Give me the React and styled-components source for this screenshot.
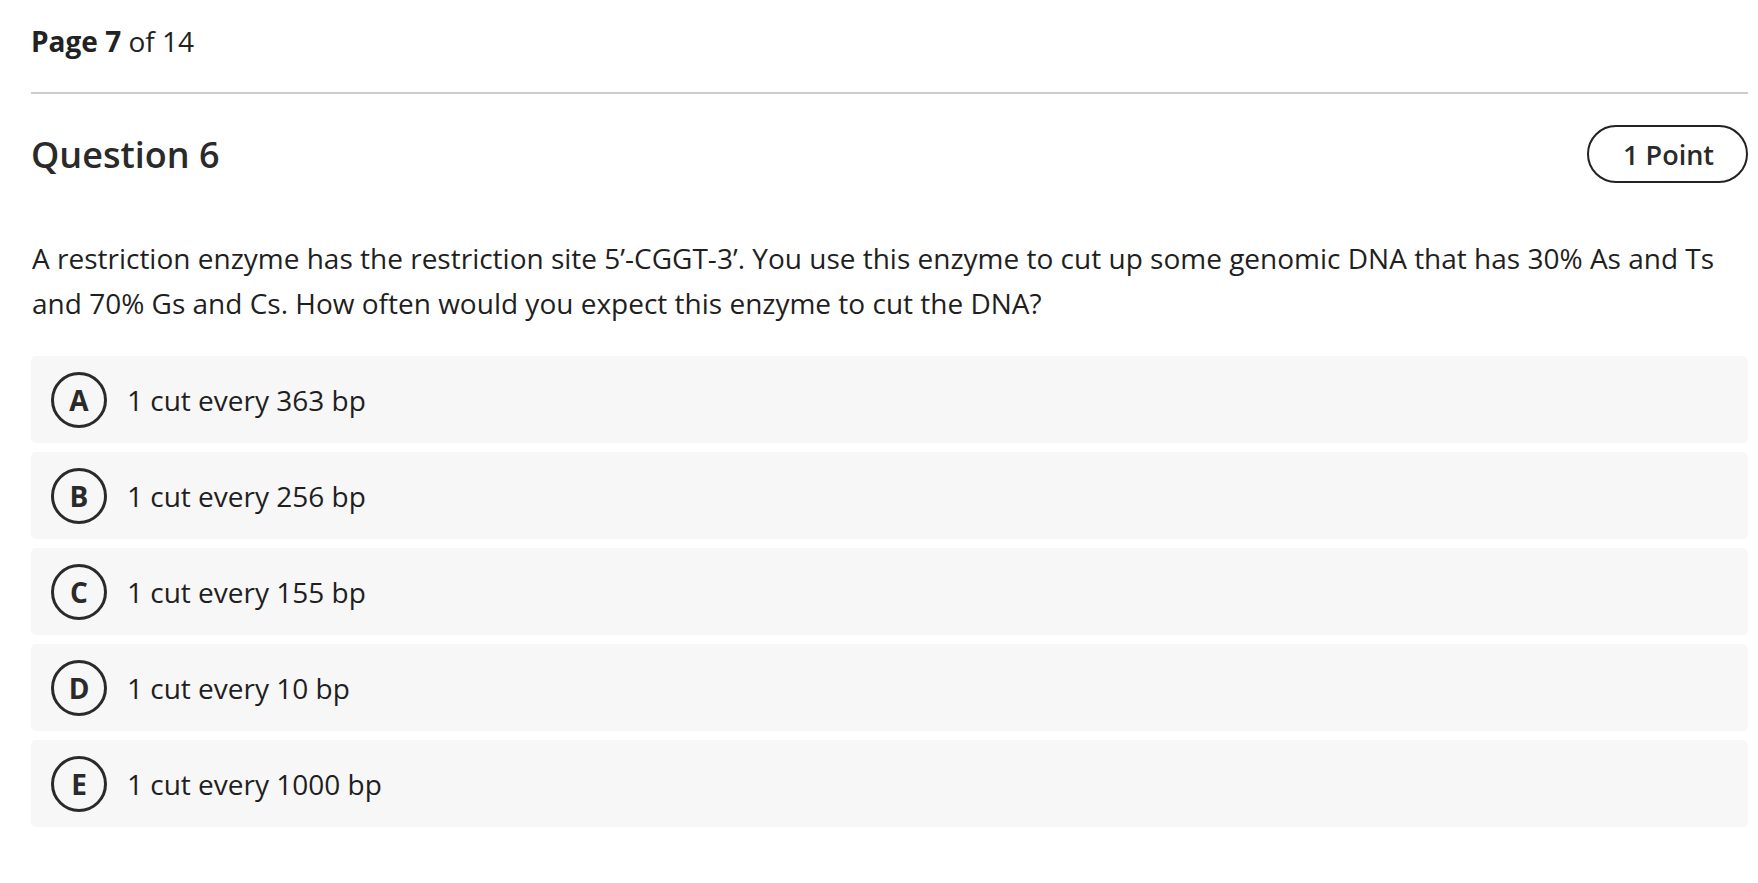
import React from 'react'
import styled, {createGlobalStyle} from 'styled-components'

const options = [
  {letter: 'A', text: '1 cut every 363 bp'},
  {letter: 'B', text: '1 cut every 256 bp'},
  {letter: 'C', text: '1 cut every 155 bp'},
  {letter: 'D', text: '1 cut every 10 bp'},
  {letter: 'E', text: '1 cut every 1000 bp'},
]

function App() {
  return (
    <Page>
      <GlobalStyle />
      <PageHeader>
        <strong>Page 7</strong> of 14
      </PageHeader>
      <TitleRow>
        <Title>Question 6</Title>
        <Points>1 Point</Points>
      </TitleRow>
      <Prompt>
        A restriction enzyme has the restriction site 5’-CGGT-3’. You use this enzyme to cut up some genomic DNA that has 30% As and Ts and 70% Gs and Cs. How often would you expect this enzyme to cut the DNA?
      </Prompt>
      <OptionList>
        {options.map((o) => (
          <Option key={o.letter}>
            <Letter>{o.letter}</Letter>
            <OptionText>{o.text}</OptionText>
          </Option>
        ))}
      </OptionList>
    </Page>
  )
}

export default App

const GlobalStyle = createGlobalStyle`
body{
  margin:0;
  background:#fff;
  font-family:"Open Sans", "Noto Sans", sans-serif;
  color:#222;
}
`

const Page = styled.div`
padding: 0 10px 40px 31px;
`

const PageHeader = styled.div`
height:94px;
box-sizing:border-box;
padding-top:21px;
font-size:28px;
line-height:40px;
color:#222;
border-bottom:2px solid #cccccc;
strong{font-weight:700;}
`

const TitleRow = styled.div`
display:flex;
align-items:center;
justify-content:space-between;
margin-top:31px;
`

const Title = styled.h2`
margin:0;
font-size:36px;
font-weight:600;
line-height:57px;
color:#2a2a2a;
`

const Points = styled.div`
height:58px;
box-sizing:border-box;
padding:0 32px 0 34px;
border:2px solid #222;
border-radius:30px;
display:flex;
align-items:center;
font-size:27px;
font-weight:600;
color:#2a2a2a;
`

const Prompt = styled.p`
margin:53px 0 0 1px;
font-size:28px;
line-height:45px;
color:#1f1f1f;
`

const OptionList = styled.div`
display:flex;
flex-direction:column;
gap:9px;
margin-top:30px;
`

const Option = styled.div`
height:87px;
display:flex;
align-items:center;
gap:20px;
padding-left:20px;
background:#f7f7f7;
border-radius:5px;
`

const Letter = styled.span`
width:56px;
height:56px;
box-sizing:border-box;
border:3px solid #2a2a2a;
border-radius:50%;
display:flex;
align-items:center;
justify-content:center;
font-size:28px;
font-weight:700;
color:#2a2a2a;
`

const OptionText = styled.span`
font-size:28px;
color:#1f1f1f;
`
